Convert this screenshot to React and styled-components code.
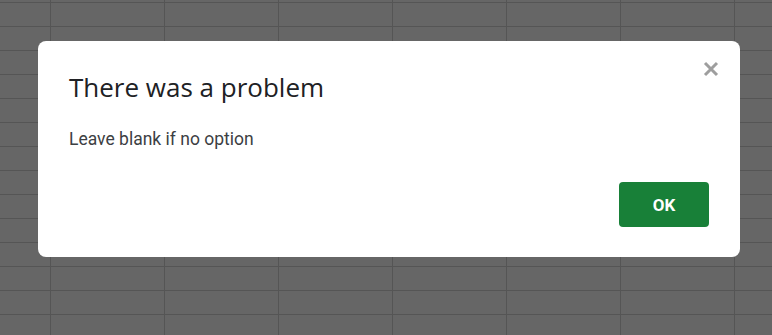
import React from 'react';
import styled, { createGlobalStyle } from 'styled-components';

const GlobalStyle = createGlobalStyle`
  html, body {
    margin: 0;
    padding: 0;
  }
  body {
    font-family: Roboto, "Liberation Sans", Arial, sans-serif;
  }
`;

// sheet grid behind the modal: 114px columns, 24px rows
const Backdrop = styled.div`
  width: 772px;
  height: 335px;
  box-sizing: border-box;
  background-color: #666666;
  background-image:
    linear-gradient(to right, #555555 1px, transparent 1px),
    linear-gradient(to bottom, #555555 1px, transparent 1px);
  background-size: 114px 24px;
  background-position: 50px 2px;
  padding: 41px 32px 0 38px;
`;

const Dialog = styled.div`
  position: relative;
  width: 702px;
  height: 216px;
  box-sizing: border-box;
  background: #ffffff;
  border-radius: 8px;
  padding: 30px 31px 0 31px;
  display: flex;
  flex-direction: column;
`;

const Title = styled.h2`
  margin: 0;
  font-family: "Open Sans", Roboto, sans-serif;
  font-weight: 400;
  font-size: 26px;
  line-height: 32px;
  color: #202124;
`;

const Body = styled.p`
  margin: 26px 0 0;
  font-size: 17.5px;
  line-height: 20px;
  color: #3c4043;
`;

const Footer = styled.div`
  display: flex;
  justify-content: flex-end;
  margin-top: 33px;
`;

const OkButton = styled.button`
  width: 90px;
  height: 45px;
  border: none;
  border-radius: 4px;
  background: #188038;
  color: #ffffff;
  font-family: Roboto, sans-serif;
  font-weight: 700;
  font-size: 17px;
  cursor: pointer;
`;

const Close = styled.button`
  position: absolute;
  top: 20px;
  right: 21px;
  width: 16px;
  height: 16px;
  padding: 0;
  border: none;
  background: none;
  cursor: pointer;
`;

const App = () => (
  <>
    <GlobalStyle />
    <Backdrop>
      <Dialog>
        <Close aria-label="Close">
          <svg width="16" height="16" viewBox="0 0 16 16">
            <path d="M2 2 L14 14 M14 2 L2 14" stroke="#9e9e9e" strokeWidth="3" />
          </svg>
        </Close>
        <Title>There was a problem</Title>
        <Body>Leave blank if no option</Body>
        <Footer>
          <OkButton>OK</OkButton>
        </Footer>
      </Dialog>
    </Backdrop>
  </>
);

export default App;
